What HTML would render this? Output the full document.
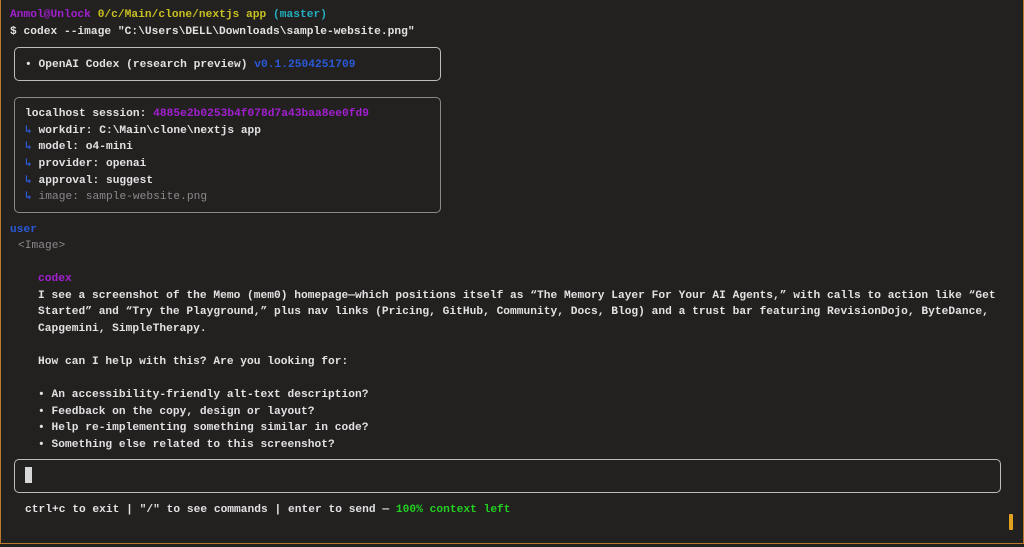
<!DOCTYPE html>
<html><head><meta charset="utf-8"><style>
html,body{margin:0;padding:0;}
body{width:1024px;height:546px;background:#232020;overflow:hidden;position:relative;font-family:"Liberation Mono","DejaVu Sans Mono",monospace;font-size:11.2px;letter-spacing:0.03px;color:#e2e2e2;font-weight:bold;}
.frame{position:absolute;left:0;top:-2px;width:1022px;height:545px;border:1px solid #b9782a;border-top:none;}
.l{position:absolute;white-space:pre;line-height:14px;}
.t{position:absolute;left:0;top:1px;width:1024px;height:546px;}
.box{position:absolute;border:1px solid #bdbdbd;border-radius:5px;}
.p{color:#a21fd0}.y{color:#c8c020}.c{color:#22b0c0}.b{color:#2a5ad8}.g{color:#8a8a8a}.gr{color:#22d020}
</style></head><body>
<div class="frame"></div>
<div class="box" style="left:14px;top:47px;width:425px;height:32px"></div>
<div class="box" style="left:14px;top:97px;width:425px;height:114px;border-color:#8a8a8a"></div>
<div class="box" style="left:14px;top:459px;width:985px;height:32px"></div>
<div style="position:absolute;left:25px;top:467px;width:7px;height:16px;background:#d8d8d8"></div>
<div style="position:absolute;left:1009px;top:514px;width:4px;height:16px;background:#e0a020;border-radius:1px"></div>
<div class="t">
<div class="l" style="left:10px;top:7px"><span class="p">Anmol@Unlock</span> <span class="y">0/c/Main/clone/nextjs app</span> <span class="c">(master)</span></div>
<div class="l" style="left:10px;top:24px">$ codex --image "C:\Users\DELL\Downloads\sample-website.png"</div>
<div class="l" style="left:25px;top:57px">• OpenAI Codex (research preview) <span class="b">v0.1.2504251709</span></div>
<div class="l" style="left:25px;top:106px">localhost session: <span class="p">4885e2b0253b4f078d7a43baa8ee0fd9</span></div>
<div class="l" style="left:25px;top:123px"><span class="b">↳</span> workdir: C:\Main\clone\nextjs app</div>
<div class="l" style="left:25px;top:139px"><span class="b">↳</span> model: o4-mini</div>
<div class="l" style="left:25px;top:156px"><span class="b">↳</span> provider: openai</div>
<div class="l" style="left:25px;top:173px"><span class="b">↳</span> approval: suggest</div>
<div class="l" style="left:25px;top:189px"><span class="b">↳</span> <span class="g" style="font-weight:normal">image: sample-website.png</span></div>
<div class="l b" style="left:10px;top:222px">user</div>
<div class="l g" style="left:18px;top:238px;font-weight:normal">&lt;Image&gt;</div>
<div class="l p" style="left:38px;top:271px">codex</div>
<div class="l" style="left:38px;top:288px">I see a screenshot of the Memo (mem0) homepage—which positions itself as “The Memory Layer For Your AI Agents,” with calls to action like “Get</div>
<div class="l" style="left:38px;top:304px">Started” and “Try the Playground,” plus nav links (Pricing, GitHub, Community, Docs, Blog) and a trust bar featuring RevisionDojo, ByteDance,</div>
<div class="l" style="left:38px;top:321px">Capgemini, SimpleTherapy.</div>
<div class="l" style="left:38px;top:354px">How can I help with this? Are you looking for:</div>
<div class="l" style="left:38px;top:387px">• An accessibility-friendly alt-text description?</div>
<div class="l" style="left:38px;top:404px">• Feedback on the copy, design or layout?</div>
<div class="l" style="left:38px;top:420px">• Help re-implementing something similar in code?</div>
<div class="l" style="left:38px;top:437px">• Something else related to this screenshot?</div>
<div class="l" style="left:25px;top:502px">ctrl+c to exit | "/" to see commands | enter to send — <span class="gr">100% context left</span></div>
</div>
</body></html>
